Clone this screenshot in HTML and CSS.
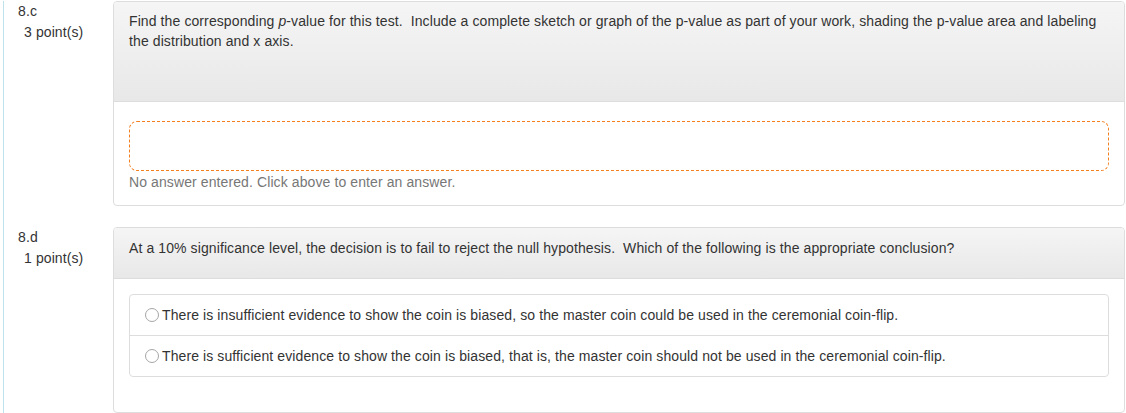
FILE: index.html
```html
<!DOCTYPE html>
<html lang="en">
<head>
    <meta charset="UTF-8">
    <title>Homework Questions</title>
    <link rel="stylesheet" href="styles.css">
</head>
<body>
    <div class="page">
        <!-- Question 8.c -->
        <div class="question first">
            <div class="qLabel">
                <div class="qNum">8.c</div>
                <div class="qPoints">3 point(s)</div>
            </div>
            <div class="card">
                <div class="cardHeader tall">
                    Find the corresponding <i>p</i>-value for this test.&nbsp; Include a complete sketch or graph of the p-value as part of your work, shading the p-value area and labeling the distribution and x axis.
                </div>
                <div class="cardBody">
                    <div class="answerBox"></div>
                    <div class="noAnswer">No answer entered. Click above to enter an answer.</div>
                </div>
            </div>
        </div>

        <!-- Question 8.d -->
        <div class="question">
            <div class="qLabel">
                <div class="qNum">8.d</div>
                <div class="qPoints">1 point(s)</div>
            </div>
            <div class="card">
                <div class="cardHeader">
                    At a 10% significance level, the decision is to fail to reject the null hypothesis.&nbsp; Which of the following is the appropriate conclusion?
                </div>
                <div class="cardBody choices">
                    <div class="listGroup">
                        <label class="listItem"><span class="radio"></span>There is insufficient evidence to show the coin is biased, so the master coin could be used in the ceremonial coin-flip.</label>
                        <label class="listItem"><span class="radio"></span>There is sufficient evidence to show the coin is biased, that is, the master coin should not be used in the ceremonial coin-flip.</label>
                    </div>
                </div>
            </div>
        </div>
    </div>
</body>
</html>
```

FILE: styles.css
```css
body {
    margin: 0;
    font-family: "Liberation Sans", Arial, sans-serif;
    font-size: 14px;
    line-height: 20px;
    letter-spacing: 0.1px;
    color: #333;
    background-color: #fff;
}

.page {
    margin-left: 3px;
    border-left: 1px solid #bfe2ec;
    min-height: 413px;
    padding-right: 1px;
}

.question {
    display: flex;
    margin-top: 21px;
}
.question.first {
    margin-top: 1px;
}

.qLabel {
    width: 109px;
    flex-shrink: 0;
}
.qNum {
    padding-left: 14px;
}
.qPoints {
    padding-left: 20px;
    margin-top: 1px;
}

.card {
    flex: 1;
    border: 1px solid #ddd;
    border-radius: 4px;
    background-color: #fff;
    overflow: hidden;
}

.cardHeader {
    height: 30px;
    padding: 10px 20px 10px 15px;
    background-image: linear-gradient(to bottom, #f5f5f5 0%, #e8e8e8 100%);
    border-bottom: 1px solid #ddd;
}
.cardHeader.tall {
    height: 80px;
    padding-top: 9px;
}

.cardBody {
    padding: 19px 15px 13px 15px;
}

.answerBox {
    height: 48px;
    border: 1px dashed #f47f1f;
    border-radius: 8px;
}
.noAnswer {
    color: #777;
    margin-top: 1px;
}

.choices {
    padding-top: 15px;
    padding-bottom: 35px;
}

.listGroup {
    border: 1px solid #ddd;
    border-radius: 4px;
}
.listItem {
    display: flex;
    align-items: center;
    height: 40px;
    padding-left: 15px;
}
.listItem + .listItem {
    border-top: 1px solid #ddd;
}

.radio {
    display: inline-block;
    width: 12px;
    height: 12px;
    border: 1px solid #a6a6a6;
    border-radius: 50%;
    margin-right: 3px;
    background-color: #fff;
}
```
